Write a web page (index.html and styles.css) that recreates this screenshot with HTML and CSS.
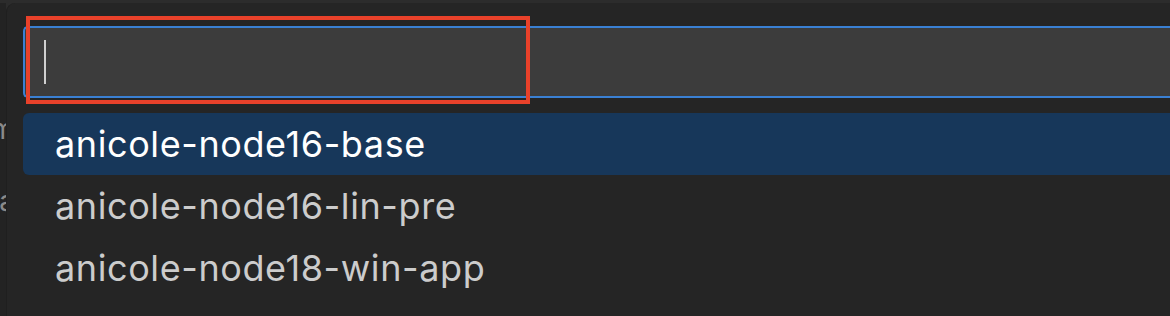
FILE: index.html
```html
<!DOCTYPE html>
<html>
<head>
<meta charset="utf-8">
<link rel="stylesheet" href="styles.css">
</head>
<body>
<div class="page">
  <div class="side">
    <div class="side-m">m</div>
    <div class="side-a">a</div>
  </div>
  <div class="panel">
    <div class="input-wrap">
      <div class="input"><span class="caret"></span></div>
      <div class="highlight"></div>
    </div>
    <ul class="list">
      <li class="row selected">anicole-node16-base</li>
      <li class="row">anicole-node16-lin-pre</li>
      <li class="row">anicole-node18-win-app</li>
    </ul>
  </div>
</div>
</body>
</html>
```
FILE: styles.css
```css
html, body {
  margin: 0;
  padding: 0;
  background: #2c2c2c;
  width: 1170px;
  height: 316px;
  overflow: hidden;
  font-family: Inter, "Noto Sans", sans-serif;
}
.page {
  display: flex;
  padding-top: 3px;
  height: 313px;
}
.side {
  width: 6px;
  background: #232323;
  overflow: hidden;
  display: flex;
  flex-direction: column;
  align-items: flex-end;
  color: #8a8a8a;
  font-size: 28px;
  line-height: 1;
}
.side-m { margin-top: 112px; margin-right: -9px; }
.side-a { margin-top: 44px; margin-right: -9px; }
.panel {
  flex: 1;
  background: #252525;
  border-top-left-radius: 9px;
  border-left: 1px solid #1f1f1f;
  padding-left: 16px;
  padding-top: 23px;
}
.input-wrap {
  position: relative;
}
.input {
  height: 68px;
  background: #3c3c3c;
  border: 2px solid #3a80d3;
  border-right: none;
  border-radius: 5px 0 0 5px;
  padding-left: 19px;
  display: flex;
  align-items: flex-start;
}
.caret {
  width: 2px;
  height: 44px;
  margin-top: 12px;
  background: #cfcfcf;
}
.highlight {
  position: absolute;
  left: 3px;
  top: -10px;
  width: 496px;
  height: 80px;
  border: 4px solid #e9412a;
}
.list {
  list-style: none;
  margin: 15px 0 0 0;
  padding: 0;
}
.row {
  height: 62px;
  line-height: 62px;
  padding-left: 32px;
  font-size: 36px;
  letter-spacing: 0.6px;
  color: #cccccc;
}
.row.selected {
  background: #17375a;
  color: #ffffff;
  border-radius: 6px 0 0 6px;
}
```
